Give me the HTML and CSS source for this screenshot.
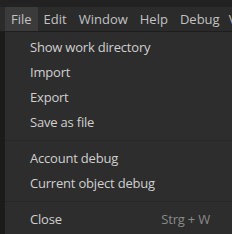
FILE: index.html
```html
<!DOCTYPE html>
<html lang="en">
<head>
    <meta charset="UTF-8">
    <title>Menu</title>
    <link rel="stylesheet" href="styles.css">
</head>
<body>
    <div class="topstrip"></div>
    <div class="menubar">
        <div class="menubar-item active">File</div>
        <div class="menubar-item">Edit</div>
        <div class="menubar-item">Window</div>
        <div class="menubar-item">Help</div>
        <div class="menubar-item">Debug</div>
        <div class="menubar-item">View</div>
    </div>
    <div class="main">
        <div class="gutter"></div>
        <div class="dropdown">
            <div class="menu-item">Show work directory</div>
            <div class="menu-item">Import</div>
            <div class="menu-item">Export</div>
            <div class="menu-item">Save as file</div>
            <div class="separator"></div>
            <div class="menu-item">Account debug</div>
            <div class="menu-item">Current object debug</div>
            <div class="separator"></div>
            <div class="menu-item">
                <span>Close</span>
                <span class="shortcut">Strg + W</span>
            </div>
        </div>
    </div>
</body>
</html>
```

FILE: styles.css
```css
html, body {
    margin: 0;
    height: 100%;
    overflow: hidden;
}

body {
    background: #1f1f1f;
    font-family: "Open Sans", "Noto Sans", sans-serif;
    font-size: 13px;
    color: #cfcfcf;
    display: flex;
    flex-direction: column;
}

.topstrip {
    height: 7px;
    background: #222222;
}

.menubar {
    display: flex;
    height: 24px;
    background: #2b2b2b;
    border-bottom: 1px solid #1e1e1e;
    padding-left: 5px;
    white-space: nowrap;
}

.menubar-item {
    flex-shrink: 0;
    padding: 0 6px;
    line-height: 24px;
    color: #c2c2c2;
}

.menubar-item:last-child {
    padding-left: 3px;
}

.menubar-item.active {
    background: #3b3b3b;
}

.main {
    flex: 1;
    display: flex;
}

.gutter {
    width: 5px;
    background: #1b1c19;
}

.dropdown {
    flex: 1;
    background: #2d2d2d;
    padding-top: 3px;
}

.menu-item {
    display: flex;
    justify-content: space-between;
    height: 25px;
    line-height: 25px;
    padding: 0 22px 0 25px;
    color: #d0d0d0;
    letter-spacing: -0.2px;
}

.shortcut {
    color: #8a8a8a;
}

.separator {
    height: 1px;
    background: #262626;
    margin: 5px 0;
}
```
